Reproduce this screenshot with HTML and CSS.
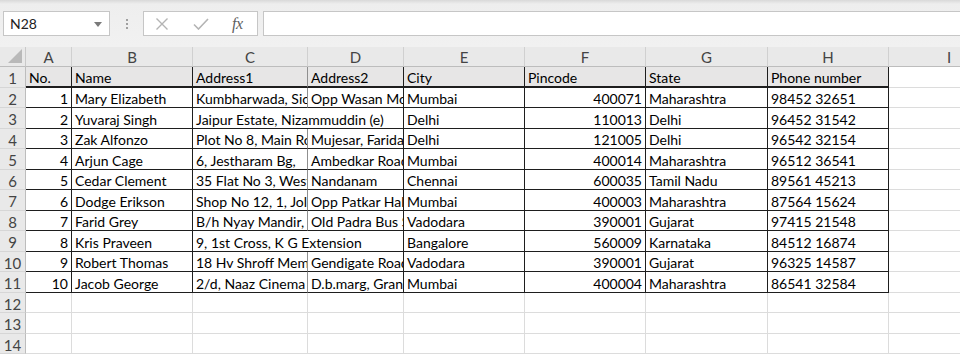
FILE: index.html
```html
<!DOCTYPE html>
<html>
<head>
<meta charset="utf-8">
<link rel="stylesheet" href="styles.css">
</head>
<body>
<div class="app">
  <div class="toolbar">
    <div class="namebox"><span class="nb-text">N28</span><svg class="nb-arrow" width="8" height="5" viewBox="0 0 8 5"><path d="M0 0H8L4 5Z" fill="#7a7a7a"/></svg></div>
    <div class="grip"><span></span><span></span><span></span></div>
    <div class="fbtns">
      <svg class="ico" width="14" height="12" viewBox="0 0 14 12"><path d="M1.5 0.5L12.5 11.5M12.5 0.5L1.5 11.5" stroke="#b4b4b4" stroke-width="1.4" fill="none"/></svg>
      <svg class="ico" width="16" height="12" viewBox="0 0 16 12"><path d="M1 6.5L5.5 11L15 1" stroke="#b4b4b4" stroke-width="1.6" fill="none"/></svg>
      <span class="fx">fx</span>
    </div>
    <div class="finput"></div>
  </div>
  <div class="sheet">
    <div class="corner"><svg width="14" height="14" viewBox="0 0 14 14"><path d="M14 0V14H0Z" fill="#b9b9b9"/></svg></div>
    <div class="ch">A</div><div class="ch">B</div><div class="ch">C</div><div class="ch">D</div><div class="ch">E</div><div class="ch">F</div><div class="ch">G</div><div class="ch">H</div><div class="ch">I</div>

    <div class="rh">1</div>
    <div class="c t hd">No.</div><div class="c t hd">Name</div><div class="c t hd cg">Address1</div><div class="c t hd">Address2</div><div class="c t hd">City</div><div class="c t hd">Pincode</div><div class="c t hd">State</div><div class="c t hd">Phone number</div><div class="c"></div>

    <div class="rh">2</div>
    <div class="c t n">1</div><div class="c t">Mary Elizabeth</div><div class="c t cg">Kumbharwada, Sion</div><div class="c t">Opp Wasan Motors</div><div class="c t">Mumbai</div><div class="c t n">400071</div><div class="c t">Maharashtra</div><div class="c t">98452 32651</div><div class="c"></div>

    <div class="rh">3</div>
    <div class="c t n">2</div><div class="c t">Yuvaraj Singh</div><div class="c t span2">Jaipur Estate, Nizammuddin (e)</div><div class="c t">Delhi</div><div class="c t n">110013</div><div class="c t">Delhi</div><div class="c t">96452 31542</div><div class="c"></div>

    <div class="rh">4</div>
    <div class="c t n">3</div><div class="c t">Zak Alfonzo</div><div class="c t cg">Plot No 8, Main Road</div><div class="c t">Mujesar, Faridabad</div><div class="c t">Delhi</div><div class="c t n">121005</div><div class="c t">Delhi</div><div class="c t">96542 32154</div><div class="c"></div>

    <div class="rh">5</div>
    <div class="c t n">4</div><div class="c t">Arjun Cage</div><div class="c t cg">6, Jestharam Bg,</div><div class="c t">Ambedkar Road</div><div class="c t">Mumbai</div><div class="c t n">400014</div><div class="c t">Maharashtra</div><div class="c t">96512 36541</div><div class="c"></div>

    <div class="rh">6</div>
    <div class="c t n">5</div><div class="c t">Cedar Clement</div><div class="c t cg">35 Flat No 3, West End</div><div class="c t">Nandanam</div><div class="c t">Chennai</div><div class="c t n">600035</div><div class="c t">Tamil Nadu</div><div class="c t">89561 45213</div><div class="c"></div>

    <div class="rh">7</div>
    <div class="c t n">6</div><div class="c t">Dodge Erikson</div><div class="c t cg">Shop No 12, 1, Jolly Maker</div><div class="c t">Opp Patkar Hall</div><div class="c t">Mumbai</div><div class="c t n">400003</div><div class="c t">Maharashtra</div><div class="c t">87564 15624</div><div class="c"></div>

    <div class="rh">8</div>
    <div class="c t n">7</div><div class="c t">Farid Grey</div><div class="c t cg">B/h Nyay Mandir,</div><div class="c t">Old Padra Bus Stand</div><div class="c t">Vadodara</div><div class="c t n">390001</div><div class="c t">Gujarat</div><div class="c t">97415 21548</div><div class="c"></div>

    <div class="rh">9</div>
    <div class="c t n">8</div><div class="c t">Kris Praveen</div><div class="c t span2">9, 1st Cross, K G Extension</div><div class="c t">Bangalore</div><div class="c t n">560009</div><div class="c t">Karnataka</div><div class="c t">84512 16874</div><div class="c"></div>

    <div class="rh">10</div>
    <div class="c t n">9</div><div class="c t">Robert Thomas</div><div class="c t cg">18 Hv Shroff Memorial</div><div class="c t">Gendigate Road</div><div class="c t">Vadodara</div><div class="c t n">390001</div><div class="c t">Gujarat</div><div class="c t">96325 14587</div><div class="c"></div>

    <div class="rh">11</div>
    <div class="c t n">10</div><div class="c t">Jacob George</div><div class="c t cg">2/d, Naaz Cinema</div><div class="c t">D.b.marg, Grant Road</div><div class="c t">Mumbai</div><div class="c t n">400004</div><div class="c t">Maharashtra</div><div class="c t">86541 32584</div><div class="c"></div>

    <div class="rh">12</div>
    <div class="c"></div><div class="c"></div><div class="c"></div><div class="c"></div><div class="c"></div><div class="c"></div><div class="c"></div><div class="c"></div><div class="c"></div>

    <div class="rh">13</div>
    <div class="c"></div><div class="c"></div><div class="c"></div><div class="c"></div><div class="c"></div><div class="c"></div><div class="c"></div><div class="c"></div><div class="c"></div>

    <div class="rh">14</div>
    <div class="c"></div><div class="c"></div><div class="c"></div><div class="c"></div><div class="c"></div><div class="c"></div><div class="c"></div><div class="c"></div><div class="c"></div>
  </div>
</div>
</body>
</html>
```
FILE: styles.css
```css
* { box-sizing: border-box; }
html, body { margin: 0; padding: 0; }
body {
  width: 960px;
  height: 354px;
  overflow: hidden;
  background: #ffffff;
  font-family: Lato, "Liberation Sans", sans-serif;
  font-size: 14px;
  color: #000;
}
.app { width: 960px; overflow: hidden; }

.toolbar {
  display: flex;
  align-items: stretch;
  height: 47px;
  padding: 11px 0 11px 3px;
  background: linear-gradient(#d9d9d9 0px, #eeeeee 4px, #f1f1f1 100%);
}
.namebox {
  width: 107px;
  background: #fff;
  border: 1px solid #c6c6c6;
  display: flex;
  align-items: center;
  justify-content: space-between;
  padding: 0 7px 0 6px;
  color: #222;
  font-size: 14px;
}
.nb-arrow { margin-top: 1px; }
.grip {
  width: 33px;
  display: flex;
  flex-direction: column;
  align-items: center;
  justify-content: center;
  gap: 2px;
}
.grip span { width: 2px; height: 2px; background: #a0a0a0; display: block; }
.fbtns {
  width: 115px;
  background: #fff;
  border: 1px solid #c6c6c6;
  display: flex;
  align-items: center;
  padding: 0 0 0 11px;
}
.fbtns .ico:first-child { margin-right: 24px; }
.fbtns .ico:nth-child(2) { margin-right: 23px; }
.fx {
  font-family: "Liberation Serif", serif;
  font-style: italic;
  font-size: 16px;
  color: #606060;
  letter-spacing: -0.5px;
  line-height: 1;
}
.finput {
  flex: 1;
  margin-left: 5px;
  background: #fff;
  border: 1px solid #c6c6c6;
  border-right: none;
}

.sheet {
  display: grid;
  grid-template-columns: 26px 46px 121px 115px 96px 121px 121px 122px 121px 121px;
  grid-template-rows: 20px repeat(14, 20.5px);
  width: 1010px;
}
.corner, .ch, .rh {
  background: #e9e9e9;
  color: #444;
  display: flex;
  align-items: center;
  justify-content: center;
}
.corner {
  border-right: 1px solid #c9c9c9;
  border-bottom: 1px solid #bdbdbd;
  justify-content: flex-end;
  align-items: flex-end;
  padding: 0 3px 3px 0;
}
.ch {
  border-right: 1px solid #d0d0d0;
  border-bottom: 1px solid #bdbdbd;
  font-size: 15px;
}
.rh {
  border-right: 1px solid #bdbdbd;
  border-bottom: 1px solid #d6d6d6;
  font-size: 15px;
  padding-top: 3px;
}
.c {
  border-right: 1px solid #dcdcdc;
  border-bottom: 1px solid #dcdcdc;
  padding: 3px 0 0 3px;
  white-space: nowrap;
  overflow: hidden;
  display: flex;
  align-items: center;
}
.c.t { border-right-color: #1e1e1e; border-bottom-color: #1e1e1e; }
.c.t.cg { border-right-color: #8f8f8f; }
.c.hd { background: #e7e6e6; border-bottom-width: 2px; }
.c.n { justify-content: flex-end; padding-right: 3px; }
.c.span2 { grid-column: span 2; }
```
